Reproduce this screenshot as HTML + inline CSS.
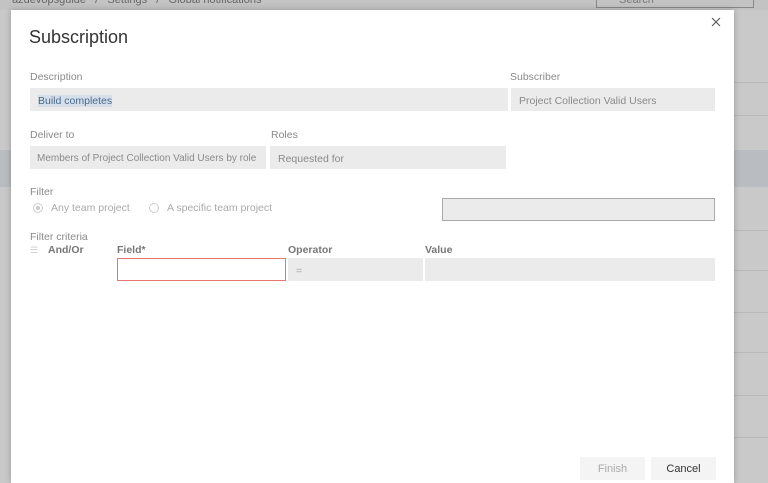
<!DOCTYPE html>
<html><head><style>
body{margin:0;width:768px;height:483px;overflow:hidden;background:#c9c9c9;font-family:"Liberation Sans",sans-serif;position:relative}
.a{position:absolute}
.box{position:absolute;background:#ebebeb;font-size:10.5px;color:#8a8a8a;line-height:26px;padding-left:8px;box-sizing:border-box;height:23px;white-space:nowrap;overflow:hidden}
.lbl{position:absolute;font-size:10.5px;color:#8a8a8a;white-space:nowrap}
.hl{position:absolute;height:1px;background:#b8b8b8}
</style></head><body>
<div class="a" style="left:0;top:0;width:768px;height:10px;background:#c3c3c3"></div>
<div class="a" style="left:12px;top:-6px;font-size:11px;color:#666">azdevopsguide &nbsp;&nbsp;/&nbsp;&nbsp; Settings &nbsp;&nbsp;/&nbsp;&nbsp; Global notifications</div>
<div class="a" style="left:596px;top:-6px;width:158px;height:14px;border:1px solid #888;font-size:11px;color:#777;box-sizing:border-box;padding-left:22px;line-height:10px">Search</div>
<div class="hl" style="left:734px;top:82px;width:34px"></div>
<div class="hl" style="left:734px;top:115px;width:34px"></div>
<div class="a" style="left:734px;top:150px;width:34px;height:37px;background:#b9bcc0"></div>
<div class="hl" style="left:734px;top:230px;width:34px"></div>
<div class="hl" style="left:734px;top:270px;width:34px"></div>
<div class="hl" style="left:734px;top:312px;width:34px"></div>
<div class="hl" style="left:734px;top:352px;width:34px"></div>
<div class="hl" style="left:734px;top:395px;width:34px"></div>
<div class="hl" style="left:734px;top:437px;width:34px"></div>
<div class="a" style="left:0;top:150px;width:11px;height:37px;background:#b9bcc0"></div>
<div class="a" style="left:11px;top:10px;width:723px;height:473px;background:#fff;box-shadow:0 0 6px rgba(0,0,0,.25)"></div>
<div class="a" style="left:29px;top:27px;font-size:18px;color:#333">Subscription</div>
<svg class="a" style="left:711px;top:17px" width="10" height="10"><path d="M1 1L9 9M9 1L1 9" stroke="#555" stroke-width="1.1"/></svg>
<div class="lbl" style="left:30px;top:71px">Description</div>
<div class="lbl" style="left:510px;top:71px">Subscriber</div>
<div class="box" style="left:30px;top:88px;width:478px;color:#4a6a8c"><span style="background:#d4dfea">Build completes</span></div>
<div class="box" style="left:511px;top:88px;width:204px">Project Collection Valid Users</div>
<div class="lbl" style="left:30px;top:129px">Deliver to</div>
<div class="lbl" style="left:271px;top:129px">Roles</div>
<div class="box" style="left:30px;top:146px;width:236px;font-size:10px;padding-left:7px">Members of Project Collection Valid Users by role</div>
<div class="box" style="left:270px;top:146px;width:236px">Requested for</div>
<div class="lbl" style="left:30px;top:186px">Filter</div>
<div class="a" style="left:33px;top:203px;width:8px;height:8px;border:1px solid #ccc;border-radius:50%;background:radial-gradient(#ccc 35%,#fff 40%)"></div>
<div class="lbl" style="left:51px;top:202px;font-size:10.5px;color:#aaa">Any team project</div>
<div class="a" style="left:149px;top:203px;width:8px;height:8px;border:1px solid #ccc;border-radius:50%"></div>
<div class="lbl" style="left:167px;top:202px;font-size:10.5px;color:#aaa">A specific team project</div>
<div class="a" style="left:442px;top:198px;width:273px;height:23px;background:#ebebeb;border:1px solid #aaa;box-sizing:border-box"></div>
<div class="lbl" style="left:30px;top:231px">Filter criteria</div>
<div class="a" style="left:30px;top:245px;font-size:9px;color:#ccc">☰</div>
<div class="a" style="left:48px;top:244px;font-size:10.5px;color:#777;font-weight:bold">And/Or</div>
<div class="a" style="left:117px;top:244px;font-size:10.5px;color:#777;font-weight:bold">Field*</div>
<div class="a" style="left:288px;top:244px;font-size:10.5px;color:#777;font-weight:bold">Operator</div>
<div class="a" style="left:425px;top:244px;font-size:10.5px;color:#777;font-weight:bold">Value</div>
<div class="a" style="left:117px;top:258px;width:169px;height:23px;border:1px solid #e8756e;box-sizing:border-box"></div>
<div class="box" style="left:288px;top:258px;width:135px;color:#aaa">=</div>
<div class="box" style="left:425px;top:258px;width:290px"></div>
<div class="a" style="left:580px;top:457px;width:65px;height:23px;background:#f4f4f4;font-size:11px;color:#aaa;text-align:center;line-height:25px">Finish</div>
<div class="a" style="left:651px;top:457px;width:65px;height:23px;background:#f4f4f4;font-size:11px;color:#333;text-align:center;line-height:25px">Cancel</div>
</body></html>
